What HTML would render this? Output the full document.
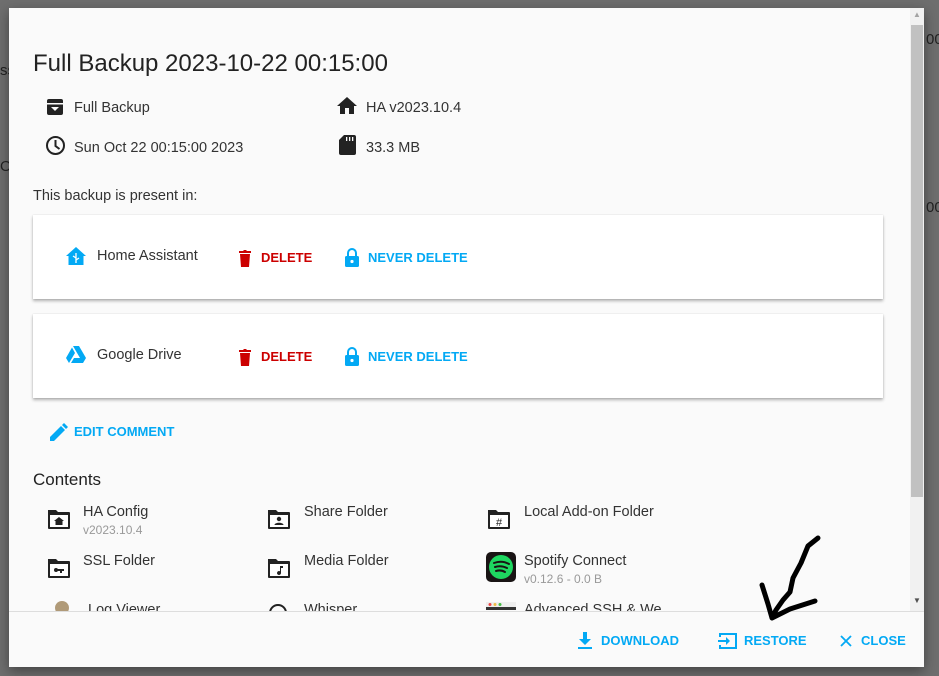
<!DOCTYPE html>
<html><head><meta charset="utf-8"><style>
*{margin:0;padding:0;box-sizing:border-box}
body{width:939px;height:676px;background:#6e6e6e;position:relative;overflow:hidden;font-family:"Liberation Sans",sans-serif;color:#212121}
.dlg{position:absolute;left:9px;top:8px;width:915px;height:659px;background:#fafafa;box-shadow:0 4px 12px rgba(0,0,0,.4);overflow:hidden}
.a{position:absolute;white-space:nowrap}
.t{font-size:14.5px;color:#333}
.card{position:absolute;left:24px;width:850px;height:84px;background:#fff;box-shadow:0 2px 3px rgba(0,0,0,.3),0 0 1px rgba(0,0,0,.15)}
.btn{font-size:13px;font-weight:bold;color:#03a9f4}
.red{color:#c00}
.sub{font-size:12px;color:#999}
.foot{position:absolute;left:0;top:603px;width:915px;height:56px;background:#fafafa;border-top:1px solid #ddd}
</style></head><body>
<div class="a" style="left:0;top:62px;font-size:15px;color:#222">ss</div>
<div class="a" style="left:0;top:158px;font-size:15px;color:#222">Or</div>
<div class="a" style="left:926px;top:31px;font-size:15px;color:#222">00</div>
<div class="a" style="left:926px;top:199px;font-size:15px;color:#222">00</div>
<div class="dlg">
<div class="a" style="left:24px;top:42px;font-size:24px;color:#222">Full Backup 2023-10-22 00:15:00</div>
<svg class="a" style="left:37px;top:90px" width="18" height="18" viewBox="0 0 18 18"><rect x="1" y="1" width="16" height="16" rx="2" fill="#222"/><rect x="1" y="5" width="16" height="1.5" fill="#fafafa"/><path d="M5 9h8l-4 4z" fill="#fafafa"/></svg>
<div class="a t" style="left:65px;top:92px">Full Backup</div>
<svg class="a" style="left:327px;top:88px" width="22" height="18" viewBox="0 0 22 18"><path d="M11 1 1 10h3v8h5v-6h4v6h5v-8h3z" fill="#222"/></svg>
<div class="a t" style="left:357px;top:92px">HA v2023.10.4</div>
<svg class="a" style="left:36px;top:127px" width="21" height="21" viewBox="0 0 21 21"><circle cx="10.5" cy="10.5" r="8.5" fill="none" stroke="#222" stroke-width="2"/><path d="M10.5 5v6l4 3" fill="none" stroke="#222" stroke-width="2"/></svg>
<div class="a t" style="left:65px;top:132px">Sun Oct 22 00:15:00 2023</div>
<svg class="a" style="left:330px;top:127px" width="17" height="20" viewBox="0 0 17 20"><path d="M5 0h10a2 2 0 0 1 2 2v16a2 2 0 0 1-2 2H2a2 2 0 0 1-2-2V5z" fill="#222"/><rect x="7" y="2" width="1.3" height="4" fill="#fafafa"/><rect x="10" y="2" width="1.3" height="4" fill="#fafafa"/><rect x="13" y="2" width="1.3" height="4" fill="#fafafa"/></svg>
<div class="a t" style="left:357px;top:132px">33.3 MB</div>
<div class="a t" style="left:24px;top:180px">This backup is present in:</div>

<div class="card" style="top:207px">
<svg class="a" style="left:33px;top:32px" width="20" height="18" viewBox="0 0 20 18"><path d="M10 0 0 9h2.5v9h15V9H20z" fill="#03a9f4"/><path d="M10 6v10M10 11l-3-2M10 13l3-2" stroke="#fff" stroke-width="1.3"/></svg>
<div class="a t" style="left:64px;top:33px">Home Assistant</div>
<svg class="a" style="left:205px;top:34px" width="14" height="18" viewBox="0 0 14 18"><path d="M1 2h4l1-1h2l1 1h4v2H1zM2 5h10l-1 13H3z" fill="#c00"/></svg>
<div class="a btn red" style="left:228px;top:35px">DELETE</div>
<svg class="a" style="left:312px;top:33px" width="14" height="19" viewBox="0 0 14 19"><path d="M3 8V5a4 4 0 0 1 8 0v3" fill="none" stroke="#03a9f4" stroke-width="2"/><rect x="0" y="8" width="14" height="11" rx="1.5" fill="#03a9f4"/><circle cx="7" cy="13.5" r="1.6" fill="#fff"/></svg>
<div class="a btn" style="left:335px;top:35px">NEVER DELETE</div>
</div>
<div class="card" style="top:306px">
<svg class="a" style="left:33px;top:32px" width="20" height="18" viewBox="0 0 20 18"><path d="M7 0h6l7 12h-6zM6 1.5 9 7 3 17 0 12zM5 17l3-5h12l-3 5z" fill="#03a9f4"/></svg>
<div class="a t" style="left:64px;top:33px">Google Drive</div>
<svg class="a" style="left:205px;top:34px" width="14" height="18" viewBox="0 0 14 18"><path d="M1 2h4l1-1h2l1 1h4v2H1zM2 5h10l-1 13H3z" fill="#c00"/></svg>
<div class="a btn red" style="left:228px;top:35px">DELETE</div>
<svg class="a" style="left:312px;top:33px" width="14" height="19" viewBox="0 0 14 19"><path d="M3 8V5a4 4 0 0 1 8 0v3" fill="none" stroke="#03a9f4" stroke-width="2"/><rect x="0" y="8" width="14" height="11" rx="1.5" fill="#03a9f4"/><circle cx="7" cy="13.5" r="1.6" fill="#fff"/></svg>
<div class="a btn" style="left:335px;top:35px">NEVER DELETE</div>
</div>

<svg class="a" style="left:41px;top:415px" width="18" height="18" viewBox="0 0 18 18"><path d="M0 18v-4L11 3l4 4L4 18zM12 2l2-2 4 4-2 2z" fill="#03a9f4"/></svg>
<div class="a btn" style="left:65px;top:416px">EDIT COMMENT</div>
<div class="a" style="left:24px;top:462px;font-size:17px;color:#222">Contents</div>

<svg class="a" style="left:38px;top:500px" width="24" height="22" viewBox="0 0 24 22"><path d="M1 2h8l2 2h11a1 1 0 0 1 1 1v15a1 1 0 0 1-1 1H2a1 1 0 0 1-1-1z" fill="#222"/><rect x="3" y="7" width="18" height="12" fill="#fff"/><path d="M12 9 7 13h1.5v4h7v-4H17z" fill="#222"/></svg>
<div class="a t" style="left:74px;top:496px">HA Config</div><div class="a sub" style="left:74px;top:515px">v2023.10.4</div>
<svg class="a" style="left:258px;top:500px" width="24" height="22" viewBox="0 0 24 22"><path d="M1 2h8l2 2h11a1 1 0 0 1 1 1v15a1 1 0 0 1-1 1H2a1 1 0 0 1-1-1z" fill="#222"/><rect x="3" y="7" width="18" height="12" fill="#fff"/><circle cx="12" cy="11" r="2.2" fill="#222"/><path d="M7.5 17c0-3 9-3 9 0z" fill="#222"/></svg>
<div class="a t" style="left:295px;top:496px">Share Folder</div>
<svg class="a" style="left:478px;top:500px" width="24" height="22" viewBox="0 0 24 22"><path d="M1 2h8l2 2h11a1 1 0 0 1 1 1v15a1 1 0 0 1-1 1H2a1 1 0 0 1-1-1z" fill="#222"/><rect x="3" y="7" width="18" height="12" fill="#fff"/><text x="12" y="18" font-size="11" text-anchor="middle" fill="#222" font-family="Liberation Sans">#</text></svg>
<div class="a t" style="left:515px;top:496px">Local Add-on Folder</div>

<svg class="a" style="left:38px;top:549px" width="24" height="22" viewBox="0 0 24 22"><path d="M1 2h8l2 2h11a1 1 0 0 1 1 1v15a1 1 0 0 1-1 1H2a1 1 0 0 1-1-1z" fill="#222"/><rect x="3" y="7" width="18" height="12" fill="#fff"/><circle cx="9" cy="13" r="2" fill="#222"/><path d="M10 12h7v2h-2v2h-2v-2h-3z" fill="#222"/></svg>
<div class="a t" style="left:74px;top:545px">SSL Folder</div>
<svg class="a" style="left:258px;top:549px" width="24" height="22" viewBox="0 0 24 22"><path d="M1 2h8l2 2h11a1 1 0 0 1 1 1v15a1 1 0 0 1-1 1H2a1 1 0 0 1-1-1z" fill="#222"/><rect x="3" y="7" width="18" height="12" fill="#fff"/><path d="M13 9h3v2h-2v5a2 2 0 1 1-1-1.7z" fill="#222"/></svg>
<div class="a t" style="left:295px;top:545px">Media Folder</div>
<svg class="a" style="left:477px;top:544px" width="30" height="30" viewBox="0 0 30 30"><rect width="30" height="30" rx="5" fill="#191414"/><circle cx="15" cy="15" r="12" fill="#1ed760"/><path d="M8 11q8-3 15 1M9 15q6-2 12 1M10 19q5-1.5 9 1" stroke="#191414" stroke-width="2" fill="none" stroke-linecap="round"/></svg>
<div class="a t" style="left:515px;top:545px">Spotify Connect</div><div class="a sub" style="left:515px;top:564px">v0.12.6 - 0.0 B</div>

<svg class="a" style="left:40px;top:592px" width="22" height="12" viewBox="0 0 22 12"><circle cx="13" cy="8" r="7" fill="#b09a78"/></svg>
<div class="a t" style="left:79px;top:594px">Log Viewer</div>
<svg class="a" style="left:258px;top:594px" width="22" height="12" viewBox="0 0 22 12"><circle cx="11" cy="11" r="8" fill="none" stroke="#222" stroke-width="2"/></svg>
<div class="a t" style="left:295px;top:594px">Whisper</div>
<svg class="a" style="left:477px;top:594px" width="30" height="8"><rect width="30" height="8" fill="#eee"/><rect y="5" width="30" height="3" fill="#333"/><circle cx="4" cy="2.5" r="1.5" fill="#e44"/><circle cx="9" cy="2.5" r="1.5" fill="#eb4"/><circle cx="14" cy="2.5" r="1.5" fill="#4b4"/></svg>
<div class="a t" style="left:515px;top:594px">Advanced SSH &amp; We</div>

<div style="position:absolute;left:901px;top:0;width:14px;height:603px;background:#f1f1f1"></div>
<div style="position:absolute;left:902px;top:17px;width:12px;height:472px;background:#c1c1c1"></div>
<div class="a" style="left:904px;top:2px;font-size:8px;color:#a3a3a3">▲</div>
<div class="a" style="left:904px;top:588px;font-size:8px;color:#505050">▼</div>

<div class="foot">
<svg class="a" style="left:569px;top:20px" width="14" height="18" viewBox="0 0 14 18"><path d="M5 0h4v7h4l-6 6-6-6h4zM0 15h14v2H0z" fill="#03a9f4"/></svg>
<div class="a btn" style="left:592px;top:21px">DOWNLOAD</div>
<svg class="a" style="left:709px;top:20px" width="20" height="18" viewBox="0 0 20 18"><path d="M2 5V2h16v14H2v-3" fill="none" stroke="#03a9f4" stroke-width="2"/><path d="M0 8h8V5l4 4-4 4v-3H0z" fill="#03a9f4"/></svg>
<div class="a btn" style="left:735px;top:21px">RESTORE</div>
<svg class="a" style="left:831px;top:23px" width="12" height="12" viewBox="0 0 12 12"><path d="M1 1l10 10M11 1 1 11" stroke="#03a9f4" stroke-width="1.8"/></svg>
<div class="a btn" style="left:852px;top:21px">CLOSE</div>
</div>
</div>
<svg class="a" style="left:0;top:0;pointer-events:none" width="939" height="676"><path d="M818 538 808 546 801 563 793 578 790 592 783 600 776 610 772 618 M762 585 768 604 772 618 M772 618 790 609 815 601" fill="none" stroke="#000" stroke-width="5" stroke-linejoin="round" stroke-linecap="round"/></svg>
</body></html>
